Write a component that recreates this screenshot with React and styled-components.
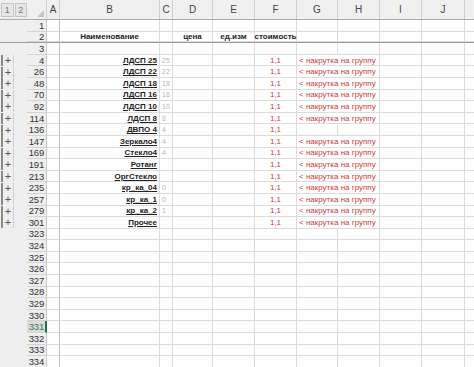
import styled, { createGlobalStyle } from 'styled-components';

const GlobalStyle = createGlobalStyle`
  body {
    margin: 0;
    overflow: hidden;
    background: #ffffff;
    font-family: "Liberation Sans", Arial, sans-serif;
  }
`;

const COLS = [
  { key: 'A', w: 13 },
  { key: 'B', w: 100 },
  { key: 'C', w: 13 },
  { key: 'D', w: 40 },
  { key: 'E', w: 42 },
  { key: 'F', w: 42 },
  { key: 'G', w: 41 },
  { key: 'H', w: 42 },
  { key: 'I', w: 42 },
  { key: 'J', w: 43 },
  { key: '', w: 40 },
];

const ROWS = [
  { n: 1 },
  { n: 2, head: true },
  { n: 3 },
  { n: 4, b: 'ЛДСП 25', c: '25', f: '1,1', g: true },
  { n: 26, b: 'ЛДСП 22', c: '22', f: '1,1', g: true },
  { n: 48, b: 'ЛДСП 18', c: '18', f: '1,1', g: true },
  { n: 70, b: 'ЛДСП 16', c: '16', f: '1,1', g: true },
  { n: 92, b: 'ЛДСП 10', c: '10', f: '1,1', g: true },
  { n: 114, b: 'ЛДСП 8', c: '8', f: '1,1', g: true },
  { n: 136, b: 'ДВПО 4', c: '4', f: '1,1' },
  { n: 147, b: 'Зеркало4', c: '4', f: '1,1', g: true },
  { n: 169, b: 'Стекло4', c: '4', f: '1,1', g: true },
  { n: 191, b: 'Ротанг', f: '1,1', g: true },
  { n: 213, b: 'ОргСтекло', f: '1,1', g: true },
  { n: 235, b: 'кр_ка_04', c: '0', f: '1,1', g: true },
  { n: 257, b: 'кр_ка_1', c: '0', f: '1,1', g: true },
  { n: 279, b: 'кр_ка_2', c: '1', f: '1,1', g: true },
  { n: 301, b: 'Прочее', f: '1,1', g: true },
  ...Array.from({ length: 12 }, (_, i) => ({ n: 323 + i })),
];

const HEADS = { B: 'Наименование', D: 'цена', E: 'ед.изм', F: 'стоимость' };

const Sheet = styled.div`
  display: flex;
  flex-direction: column;
  width: 474px;
  height: 367px;
  overflow: hidden;
`;

const HeaderRow = styled.div`
  display: flex;
  height: 20px;
  flex-shrink: 0;
  background: #f0f0f0;
  border-bottom: 1px solid #ababab;
  box-sizing: border-box;
`;

const Row = styled.div`
  display: flex;
  height: 11.6px;
  flex-shrink: 0;
  box-sizing: border-box;
  border-bottom: ${({ $freeze }) => ($freeze ? '1px solid #9c9c9c' : 'none')};
`;

const Gutter = styled.div`
  width: 27px;
  flex-shrink: 0;
  background: #efefef;
  display: flex;
  align-items: center;
  box-sizing: border-box;
`;

const LevelBox = styled.div`
  width: 13px;
  height: 14px;
  margin-left: 1px;
  border: 1px solid #c6c6c6;
  background: #e6e6e6;
  color: #777;
  font-size: 9px;
  display: flex;
  align-items: center;
  justify-content: center;
  box-sizing: border-box;
`;

const PlusBox = styled.div`
  width: 13px;
  height: 11px;
  margin-left: 1px;
  border-left: 2px solid #8a8a8a;
  border-right: 1px solid #cfcfcf;
  color: #555;
  font-size: 11px;
  line-height: 11px;
  text-align: center;
  box-sizing: border-box;
`;

const Corner = styled.div`
  width: 20px;
  flex-shrink: 0;
  position: relative;
  border-right: 1px solid #cfcfcf;
  box-sizing: border-box;
`;

const Triangle = styled.div`
  position: absolute;
  right: 2px;
  bottom: 2px;
  width: 0;
  height: 0;
  border-left: 7px solid transparent;
  border-bottom: 7px solid #c4c4c4;
`;

const ColHead = styled.div`
  width: ${({ $w }) => $w}px;
  flex-shrink: 0;
  border-right: 1px solid #d0d0d0;
  box-sizing: border-box;
  color: #444;
  font-size: 10px;
  display: flex;
  align-items: center;
  justify-content: center;
`;

const RowHead = styled.div`
  width: 20px;
  flex-shrink: 0;
  box-sizing: border-box;
  background: ${({ $sel }) => ($sel ? '#d8dcd9' : '#efefef')};
  color: ${({ $sel }) => ($sel ? '#3d7a55' : '#333')};
  border-bottom: 1px solid #d4d4d4;
  border-right: ${({ $sel }) => ($sel ? '2px solid #217346' : '1px solid #c8c8c8')};
  font-size: 9.5px;
  letter-spacing: -0.2px;
  display: flex;
  align-items: center;
  justify-content: flex-end;
  padding-right: ${({ $sel }) => ($sel ? '1px' : '2px')};
`;

const Cell = styled.div`
  width: ${({ $w }) => $w}px;
  flex-shrink: 0;
  box-sizing: border-box;
  border-bottom: 1px solid #dcdcdc;
  border-right: ${({ $line }) => $line};
  display: flex;
  align-items: center;
  justify-content: ${({ $align }) => $align || 'flex-start'};
  white-space: nowrap;
  overflow: visible;
  font-size: 8px;
  padding: 0 2px;
  position: relative;
  z-index: ${({ $over }) => ($over ? 1 : 0)};
`;

const Name = styled.span`
  font-weight: bold;
  text-decoration: underline;
  color: #222;
`;

const HeadText = styled.span`
  font-weight: bold;
  color: #222;
`;

const Qty = styled.span`
  color: #b5b5b5;
  font-size: 7px;
`;

const Red = styled.span`
  color: #cc3a3a;
`;

const lineFor = (key, row) => {
  if (key === 'G' && row.g) return '1px solid transparent';
  if (key === 'A') return '1px solid #c4c4c4';
  return '1px solid #dcdcdc';
};

const renderCell = (key, row) => {
  if (row.head && HEADS[key]) return <HeadText>{HEADS[key]}</HeadText>;
  if (key === 'B' && row.b) return <Name>{row.b}</Name>;
  if (key === 'C' && row.c) return <Qty>{row.c}</Qty>;
  if (key === 'F' && row.f) return <Red>{row.f}</Red>;
  if (key === 'G' && row.g) return <Red>&lt; накрутка на группу</Red>;
  return null;
};

const alignFor = (key, row) => {
  if (row.head) return 'center';
  if (key === 'B') return 'flex-end';
  if (key === 'F') return 'center';
  return 'flex-start';
};

export default function App() {
  return (
    <>
      <GlobalStyle />
      <Sheet>
        <HeaderRow>
          <Gutter>
            <LevelBox>1</LevelBox>
            <LevelBox>2</LevelBox>
          </Gutter>
          <Corner>
            <Triangle />
          </Corner>
          {COLS.map((c, i) => (
            <ColHead key={i} $w={c.w}>
              {c.key}
            </ColHead>
          ))}
        </HeaderRow>
        {ROWS.map((row) => (
          <Row key={row.n} $freeze={row.n === 2}>
            <Gutter>{row.b && <PlusBox>+</PlusBox>}</Gutter>
            <RowHead $sel={row.n === 331}>{row.n}</RowHead>
            {COLS.map((c, i) => (
              <Cell
                key={i}
                $w={c.w}
                $line={lineFor(c.key, row)}
                $align={alignFor(c.key, row)}
                $over={c.key === 'G'}
              >
                {renderCell(c.key, row)}
              </Cell>
            ))}
          </Row>
        ))}
      </Sheet>
    </>
  );
}
